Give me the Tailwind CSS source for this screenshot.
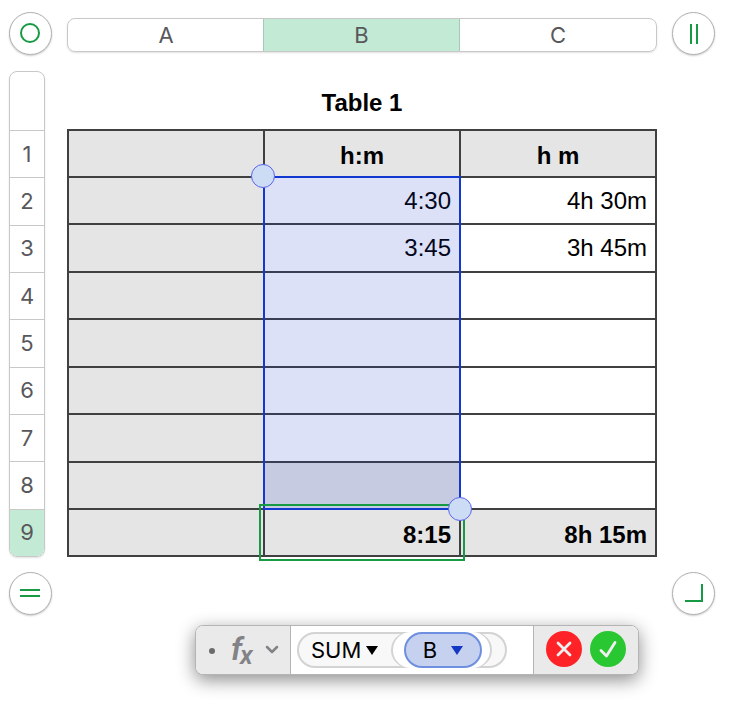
<!DOCTYPE html>
<html lang="en">
<head>
  <meta charset="UTF-8">
  <meta name="viewport" content="width=device-width, initial-scale=1.0">
  <title>Table 1</title>
  <script src="https://cdn.jsdelivr.net/npm/@tailwindcss/browser@4"></script>
</head>
<body class="bg-white font-['Liberation_Sans',Arial,sans-serif] text-black">
  <main class="pt-3">
    <!-- Sheet: handles in the corners, headers along the top and left -->
    <div class="grid grid-cols-[43px_1fr_43px] gap-[15px] items-start pl-[9px] pr-[23px]">
      <button type="button" aria-label="Select table" class="size-[43px] rounded-full border border-[#b0b0b0] bg-white shadow-[0_1px_2px_rgba(0,0,0,0.2)] flex items-center justify-center">
        <svg class="size-[21px]" viewBox="0 0 21 21" fill="none" stroke="#179a43" stroke-width="2"><circle cx="10" cy="10" r="9"/></svg>
      </button>

      <!-- Column headers -->
      <div class="mt-[6px] mb-1 h-[34px] grid grid-cols-3 rounded-lg border border-[#c8c8c8] overflow-hidden shadow-[0_1px_2px_rgba(0,0,0,0.12)] font-[Inter,sans-serif] text-[22px] leading-8 text-[#58585c]">
        <button type="button">A</button>
        <button type="button" class="-ml-px bg-[#c3ead5] border-x border-[#a9c9b8]">B</button>
        <button type="button">C</button>
      </div>

      <button type="button" aria-label="Add columns" class="size-[43px] rounded-full border border-[#b0b0b0] bg-white shadow-[0_1px_2px_rgba(0,0,0,0.2)] flex items-center justify-center">
        <svg class="size-[21px]" viewBox="0 0 21 21" fill="none" stroke="#179a43" stroke-width="2"><path d="M8 1v20M14 1v20"/></svg>
      </button>

      <!-- Row headers -->
      <div class="w-9 self-stretch flex flex-col rounded-lg border border-[#c8c8c8] overflow-hidden divide-y divide-[#c8c8c8] shadow-[0_1px_2px_rgba(0,0,0,0.12)] font-[Inter,sans-serif] text-[22px] text-[#58585c]">
        <div class="h-[59px] shrink-0"></div>
        <button type="button" class="flex-1">1</button>
        <button type="button" class="flex-1">2</button>
        <button type="button" class="flex-1">3</button>
        <button type="button" class="flex-1">4</button>
        <button type="button" class="flex-1">5</button>
        <button type="button" class="flex-1">6</button>
        <button type="button" class="flex-1">7</button>
        <button type="button" class="flex-1">8</button>
        <button type="button" class="flex-1 bg-[#c3ead5]">9</button>
      </div>

      <div class="relative">
        <table class="w-full h-[428px] table-fixed border-collapse text-2xl leading-7">
          <caption class="pt-[18px] pb-[13px] leading-[27px] font-bold">Table 1</caption>
          <thead>
            <tr class="h-[47px]">
              <td class="border-2 border-[#404040] bg-[#e5e5e5]"></td>
              <th scope="col" class="border-2 border-[#404040] bg-[#e5e5e5] pt-1">h:m</th>
              <th scope="col" class="border-2 border-[#404040] bg-[#e5e5e5] pt-1">h m</th>
            </tr>
          </thead>
          <tbody class="text-right">
            <tr class="h-[47px]">
              <td class="border-2 border-[#404040] bg-[#e5e5e5]"></td>
              <td class="border-2 border-[#404040] px-2">4:30</td>
              <td class="border-2 border-[#404040] px-2">4h 30m</td>
            </tr>
            <tr class="h-[47px]">
              <td class="border-2 border-[#404040] bg-[#e5e5e5]"></td>
              <td class="border-2 border-[#404040] px-2">3:45</td>
              <td class="border-2 border-[#404040] px-2">3h 45m</td>
            </tr>
            <tr class="h-[47px]">
              <td class="border-2 border-[#404040] bg-[#e5e5e5]"></td>
              <td class="border-2 border-[#404040]"></td>
              <td class="border-2 border-[#404040]"></td>
            </tr>
            <tr class="h-[47px]">
              <td class="border-2 border-[#404040] bg-[#e5e5e5]"></td>
              <td class="border-2 border-[#404040]"></td>
              <td class="border-2 border-[#404040]"></td>
            </tr>
            <tr class="h-[47px]">
              <td class="border-2 border-[#404040] bg-[#e5e5e5]"></td>
              <td class="border-2 border-[#404040]"></td>
              <td class="border-2 border-[#404040]"></td>
            </tr>
            <tr class="h-[47px]">
              <td class="border-2 border-[#404040] bg-[#e5e5e5]"></td>
              <td class="border-2 border-[#404040]"></td>
              <td class="border-2 border-[#404040]"></td>
            </tr>
            <tr class="h-[47px]">
              <td class="border-2 border-[#404040] bg-[#e5e5e5]"></td>
              <td class="border-2 border-[#404040] bg-[#e6e6e6]"></td>
              <td class="border-2 border-[#404040]"></td>
            </tr>
          </tbody>
          <tfoot class="text-right font-bold">
            <tr class="h-[47px]">
              <td class="border-2 border-[#404040] bg-[#e5e5e5]"></td>
              <td class="border-2 border-[#404040] bg-[#e5e5e5] px-2 pt-1">8:15</td>
              <td class="border-2 border-[#404040] bg-[#e5e5e5] px-2 pt-1">8h 15m</td>
            </tr>
          </tfoot>
        </table>

        <!-- Range used by the formula, the edited cell, and the range's drag handles -->
        <div class="absolute top-[105px] bottom-[47px] inset-x-1/3 -mx-px border-2 border-[#1338d2] bg-[#1c37c9]/15 bg-clip-padding"></div>
        <div class="absolute h-[57px] -bottom-1 inset-x-1/3 -mx-[5px] border-2 border-[#179a43]"></div>
        <div class="absolute top-[105px] bottom-[48px] inset-x-1/3">
          <span class="absolute -top-3 -left-3 size-6 -ml-px rounded-full border border-[#5a64ee] bg-[#cddcf5]"></span>
          <span class="absolute -bottom-3 -right-3 size-6 rounded-full border border-[#5a64ee] bg-[#cddcf5]"></span>
        </div>
      </div>
      <div></div>

      <button type="button" aria-label="Add rows" class="size-[43px] rounded-full border border-[#b0b0b0] bg-white shadow-[0_1px_2px_rgba(0,0,0,0.2)] flex items-center justify-center">
        <svg class="size-[21px]" viewBox="0 0 21 21" fill="none" stroke="#179a43" stroke-width="2"><path d="M0 7h20M0 13h20"/></svg>
      </button>
      <div></div>
      <button type="button" aria-label="Add rows and columns" class="size-[43px] rounded-full border border-[#b0b0b0] bg-white shadow-[0_1px_2px_rgba(0,0,0,0.2)] flex items-center justify-center">
        <svg class="size-[21px]" viewBox="0 0 21 21" fill="none" stroke="#179a43" stroke-width="2"><path d="M19 1v17H2"/></svg>
      </button>
    </div>

    <!-- Formula editor -->
    <div class="mt-[10px] mb-8 ml-[195px] w-fit h-[50px] flex rounded-lg border border-[#b4b4b4] bg-white overflow-hidden shadow-[0_5px_18px_rgba(0,0,0,0.45)] font-[Inter,sans-serif] text-[22px] leading-9">
      <button type="button" aria-label="Formula options" class="w-[95px] border-r border-[#b4b4b4] bg-[#eaeaea] text-[#828287] flex items-center pl-[13px]">
        <span class="mt-[2px] size-[6px] rounded-full bg-[#6b6b6b]"></span>
        <svg class="ml-4 w-8 h-12" viewBox="0 0 32 48" fill="currentColor" font-family="Roboto, sans-serif" font-weight="600" font-style="italic">
          <text x="0" y="34" font-size="32">f<tspan x="9" y="38" font-size="26">x</tspan></text>
        </svg>
        <svg class="ml-[2px] w-[14px] h-3" viewBox="0 0 14 12" fill="none" stroke="currentColor" stroke-width="2.5" stroke-linecap="round" stroke-linejoin="round"><path d="M2 3l5 5 5-5"/></svg>
      </button>
      <div class="w-[242px] pl-[6px] flex items-center">
        <div class="h-9 pl-[14px] pr-[25px] flex rounded-full bg-[#f8f8f8] shadow-[inset_0_0_0_2px_#d3d3d3]">
          <button type="button" class="w-[93px] flex items-center gap-[5px]">
            SUM
            <svg class="w-3 h-[10px]" viewBox="0 0 12 10" fill="currentColor"><path d="M0 1h12L6 10z"/></svg>
          </button>
          <button type="button" class="w-[78px] h-9 rounded-full border-2 border-[#6e8fe0] bg-[#c5d1ef] shadow-[-11px_0_0_#fff,8px_0_0_#fff,-13px_0_0_#d3d3d3,10px_0_0_#d3d3d3] flex items-center justify-center gap-[14px]">
            B
            <svg class="w-3 h-[10px]" viewBox="0 0 12 10" fill="#1338c4"><path d="M0 1h12L6 10z"/></svg>
          </button>
        </div>
      </div>
      <div class="border-l border-[#b4b4b4] bg-[#eaeaea] px-3 pb-[2px] flex items-center gap-2">
        <button type="button" aria-label="Cancel" class="size-9 rounded-full bg-[#ff2226] flex items-center justify-center">
          <svg class="size-6" viewBox="0 0 24 24" fill="none" stroke="#f0f0f0" stroke-width="2.8" stroke-linecap="round"><path d="M6 6l12 12M18 6L6 18"/></svg>
        </button>
        <button type="button" aria-label="Accept" class="size-9 rounded-full bg-[#29c732] flex items-center justify-center">
          <svg class="size-6" viewBox="0 0 24 24" fill="none" stroke="#f0f0f0" stroke-width="2.8" stroke-linecap="round" stroke-linejoin="round"><path d="M5 13.5l5.5 5.5L19 5.5"/></svg>
        </button>
      </div>
    </div>
  </main>
</body>
</html>
